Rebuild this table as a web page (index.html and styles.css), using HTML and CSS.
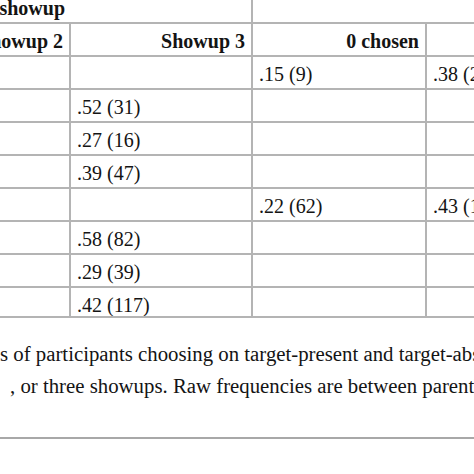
FILE: index.html
```html
<!DOCTYPE html>
<html>
<head>
<meta charset="utf-8">
<link rel="stylesheet" href="styles.css">
</head>
<body>
<div class="fig">
  <div class="grid">
    <div class="c top span2">Number of showup</div>
    <div class="c top span2"></div>
    <div class="c hd">Showup 2</div>
    <div class="c hd">Showup 3</div>
    <div class="c hd">0 chosen</div>
    <div class="c hd">1 chosen</div>

    <div class="c"></div><div class="c"></div><div class="c">.15 (9)</div><div class="c">.38 (23)</div>
    <div class="c"></div><div class="c">.52 (31)</div><div class="c"></div><div class="c"></div>
    <div class="c"></div><div class="c">.27 (16)</div><div class="c"></div><div class="c"></div>
    <div class="c"></div><div class="c">.39 (47)</div><div class="c"></div><div class="c"></div>
    <div class="c"></div><div class="c"></div><div class="c">.22 (62)</div><div class="c">.43 (121)</div>
    <div class="c"></div><div class="c">.58 (82)</div><div class="c"></div><div class="c"></div>
    <div class="c"></div><div class="c">.29 (39)</div><div class="c"></div><div class="c"></div>
    <div class="c"></div><div class="c">.42 (117)</div><div class="c"></div><div class="c"></div>
  </div>
  <div class="caption">
    <div class="line">s of participants choosing on target-present and target-absent lineups</div>
    <div class="line l2">, or three showups. Raw frequencies are between parentheses.</div>
  </div>
  <div class="rule"></div>
</div>
</body>
</html>
```

FILE: styles.css
```css
html, body {
  margin: 0;
  padding: 0;
  width: 474px;
  height: 474px;
  overflow: hidden;
  background: #ffffff;
}

.fig {
  font-family: "Liberation Serif", "Times New Roman", serif;
  color: #141414;
  width: 474px;
}

.grid {
  display: grid;
  grid-template-columns: 173px 180px 172px 200px;
  grid-template-rows: 33px 31px repeat(7, 31px) 28px;
  gap: 2px;
  background: #b4b4b4;
  padding-bottom: 2px;
  margin: -11px 0 0 -104px;
  width: max-content;
}

.c {
  background: #ffffff;
  font-size: 20px;
  line-height: normal;
  padding: 6px 6px 0 6px;
  white-space: nowrap;
  overflow: hidden;
}

.top {
  padding-top: 8px;
  font-weight: bold;
}

.span2 {
  grid-column: span 2;
}

.hd {
  font-weight: bold;
  text-align: right;
}

.caption {
  margin-top: 20px;
  font-size: 20.8px;
  line-height: 32px;
}

.line {
  white-space: nowrap;
}

.l2 {
  padding-left: 10px;
}

.rule {
  margin-top: 35px;
  height: 2px;
  background: #a8a8a8;
}
```
